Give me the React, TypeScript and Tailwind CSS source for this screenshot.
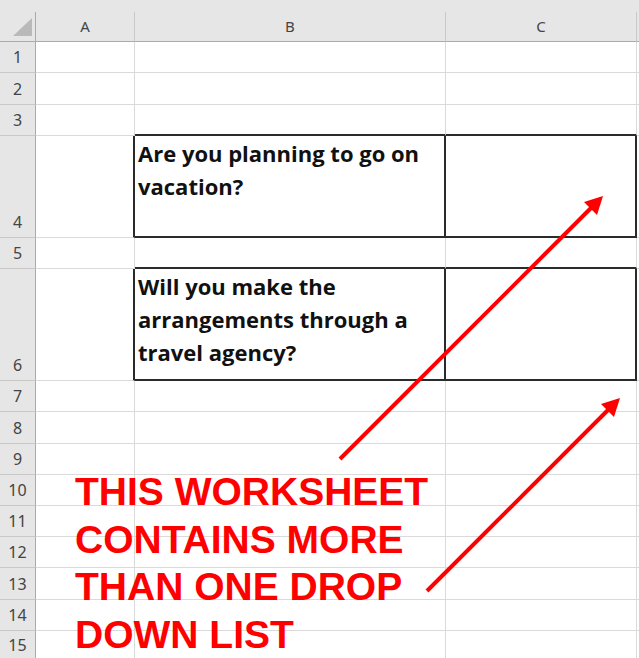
import React from "react";

const rowHeights = [31, 32, 31, 102, 31, 112, 31, 32, 31, 31, 31, 31, 32, 31, 30];

const font = { fontFamily: "'Noto Sans', 'Open Sans', sans-serif" };
const cellFont = { fontFamily: "'Open Sans', Lato, sans-serif" };

function ColHeader({ label, last }: { label: string; last?: boolean }) {
  return (
    <div
      className={`flex items-end justify-center pb-[7px] text-[15px] leading-none text-[#444] border-b border-[#ababab] ${
        last ? "" : "border-r border-r-[#c8c8c8]"
      }`}
    >
      {label}
    </div>
  );
}

function App() {
  return (
    <div className="relative w-[639px] h-[658px] overflow-hidden bg-white" style={font}>
      {/* column headers */}
      <div className="h-[12px] bg-[#e6e6e6]" />
      <div className="grid grid-cols-[36px_99px_311px_191px_1fr] h-[30px] bg-[#e6e6e6]">
        <div className="relative border-r border-b border-[#ababab]">
          <div
            className="absolute left-[13px] top-[6px] w-[19px] h-[18px] bg-[#b9b9b9]"
            style={{ clipPath: "polygon(100% 0, 100% 100%, 0 100%)" }}
          />
        </div>
        <ColHeader label="A" />
        <ColHeader label="B" />
        <ColHeader label="C" />
        <ColHeader label="" last />
      </div>

      {/* rows */}
      {rowHeights.map((h, i) => {
        const row = i + 1;
        const boxed = row === 4 || row === 6;
        const aboveBox = row === 3 || row === 5;
        return (
          <div
            key={row}
            className="grid grid-cols-[36px_99px_311px_191px_1fr]"
            style={{ height: h }}
          >
            <div className="flex items-end justify-center pb-[7px] text-[16px] leading-none text-[#444] bg-[#e6e6e6] border-r border-r-[#ababab] border-b border-b-[#c8c8c8]">
              {row}
            </div>
            <div
              className={`border-b border-b-[#dadada] ${
                boxed ? "border-r-2 border-r-[#2b2b2b]" : "border-r border-r-[#dadada]"
              }`}
            />
            <div
              className={`${
                boxed || aboveBox ? "border-b-2 border-b-[#2b2b2b]" : "border-b border-b-[#dadada]"
              } ${boxed ? "border-r-2 border-r-[#2b2b2b]" : "border-r border-r-[#dadada]"} pl-[3px] pt-[1px] pr-2`}
            >
              {row === 4 && (
                <p className="font-bold text-[22px] leading-[33px] text-[#111]" style={cellFont}>
                  Are you planning to go on vacation?
                </p>
              )}
              {row === 6 && (
                <p className="font-bold text-[22px] leading-[33px] text-[#111]" style={cellFont}>
                  Will you make the arrangements through a travel agency?
                </p>
              )}
            </div>
            <div
              className={`${
                boxed || aboveBox ? "border-b-2 border-b-[#2b2b2b]" : "border-b border-b-[#dadada]"
              } ${boxed ? "border-r-2 border-r-[#2b2b2b]" : "border-r border-r-[#dadada]"}`}
            />
            <div className="border-b border-b-[#dadada]" />
          </div>
        );
      })}

      {/* callout text box */}
      <div
        className="absolute left-[75px] top-[468px] text-[39px] leading-[47.5px] font-bold text-[#ff0000] whitespace-nowrap"
        style={{ fontFamily: "'Liberation Sans', Arial, sans-serif" }}
      >
        THIS WORKSHEET
        <br />
        CONTAINS MORE
        <br />
        THAN ONE DROP
        <br />
        DOWN LIST
      </div>

      {/* arrows */}
      <svg className="absolute inset-0 pointer-events-none" width="639" height="658" viewBox="0 0 639 658">
        <line x1="340" y1="459" x2="591" y2="208" stroke="#ff0000" strokeWidth="4" />
        <polygon points="603,196 597,215 584,202" fill="#ff0000" />
        <line x1="427" y1="591" x2="608" y2="410" stroke="#ff0000" strokeWidth="4" />
        <polygon points="620,398 614,417 601,404" fill="#ff0000" />
      </svg>
    </div>
  );
}

export default App;
